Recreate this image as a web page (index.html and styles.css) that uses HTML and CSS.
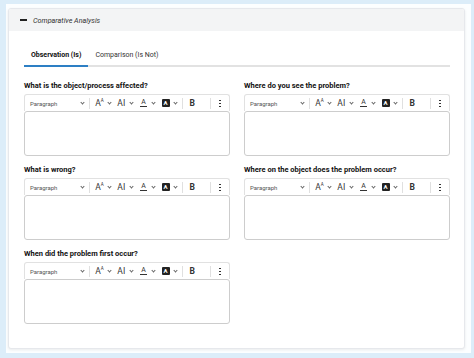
FILE: index.html
```html
<!DOCTYPE html>
<html lang="en">
<head>
    <meta charset="UTF-8">
    <meta name="viewport" content="width=device-width, initial-scale=1.0">
    <title>Comparative Analysis</title>
    <link rel="stylesheet" href="styles.css">
</head>
<body>
    <div class="page">
        <div class="card">
            <div class="card-header">
                <span class="collapse-icon"></span>
                <span class="card-title">Comparative Analysis</span>
            </div>
            <div class="card-body">
                <div class="tabs">
                    <div class="tab active">Observation (Is)</div>
                    <div class="tab">Comparison (Is Not)</div>
                </div>

                <div class="fields">
                    <div class="field">
                        <label class="field-label">What is the object/process affected?</label>
                        <div class="editor">
                            <div class="toolbar">
                                <div class="tb-select">Paragraph <span class="chev"></span></div>
                                <div class="tb-sep"></div>
                                <div class="tb-btn"><span class="ic ic-size">A<sup>A</sup></span><span class="chev"></span></div>
                                <div class="tb-btn"><span class="ic ic-family">AI</span><span class="chev"></span></div>
                                <div class="tb-btn"><span class="ic"><span class="ic-color">A</span></span><span class="chev"></span></div>
                                <div class="tb-btn"><span class="ic"><span class="ic-bg">A</span></span><span class="chev"></span></div>
                                <div class="tb-sep"></div>
                                <div class="tb-btn"><span class="ic-bold">B</span></div>
                                <div class="tb-fill"></div>
                                <div class="tb-sep"></div>
                                <div class="tb-more"><span class="ic-more"></span></div>
                            </div>
                            <div class="editor-area"></div>
                        </div>
                    </div>

                    <div class="field">
                        <label class="field-label">Where do you see the problem?</label>
                        <div class="editor">
                            <div class="toolbar">
                                <div class="tb-select">Paragraph <span class="chev"></span></div>
                                <div class="tb-sep"></div>
                                <div class="tb-btn"><span class="ic ic-size">A<sup>A</sup></span><span class="chev"></span></div>
                                <div class="tb-btn"><span class="ic ic-family">AI</span><span class="chev"></span></div>
                                <div class="tb-btn"><span class="ic"><span class="ic-color">A</span></span><span class="chev"></span></div>
                                <div class="tb-btn"><span class="ic"><span class="ic-bg">A</span></span><span class="chev"></span></div>
                                <div class="tb-sep"></div>
                                <div class="tb-btn"><span class="ic-bold">B</span></div>
                                <div class="tb-fill"></div>
                                <div class="tb-sep"></div>
                                <div class="tb-more"><span class="ic-more"></span></div>
                            </div>
                            <div class="editor-area"></div>
                        </div>
                    </div>

                    <div class="field">
                        <label class="field-label">What is wrong?</label>
                        <div class="editor">
                            <div class="toolbar">
                                <div class="tb-select">Paragraph <span class="chev"></span></div>
                                <div class="tb-sep"></div>
                                <div class="tb-btn"><span class="ic ic-size">A<sup>A</sup></span><span class="chev"></span></div>
                                <div class="tb-btn"><span class="ic ic-family">AI</span><span class="chev"></span></div>
                                <div class="tb-btn"><span class="ic"><span class="ic-color">A</span></span><span class="chev"></span></div>
                                <div class="tb-btn"><span class="ic"><span class="ic-bg">A</span></span><span class="chev"></span></div>
                                <div class="tb-sep"></div>
                                <div class="tb-btn"><span class="ic-bold">B</span></div>
                                <div class="tb-fill"></div>
                                <div class="tb-sep"></div>
                                <div class="tb-more"><span class="ic-more"></span></div>
                            </div>
                            <div class="editor-area"></div>
                        </div>
                    </div>

                    <div class="field">
                        <label class="field-label">Where on the object does the problem occur?</label>
                        <div class="editor">
                            <div class="toolbar">
                                <div class="tb-select">Paragraph <span class="chev"></span></div>
                                <div class="tb-sep"></div>
                                <div class="tb-btn"><span class="ic ic-size">A<sup>A</sup></span><span class="chev"></span></div>
                                <div class="tb-btn"><span class="ic ic-family">AI</span><span class="chev"></span></div>
                                <div class="tb-btn"><span class="ic"><span class="ic-color">A</span></span><span class="chev"></span></div>
                                <div class="tb-btn"><span class="ic"><span class="ic-bg">A</span></span><span class="chev"></span></div>
                                <div class="tb-sep"></div>
                                <div class="tb-btn"><span class="ic-bold">B</span></div>
                                <div class="tb-fill"></div>
                                <div class="tb-sep"></div>
                                <div class="tb-more"><span class="ic-more"></span></div>
                            </div>
                            <div class="editor-area"></div>
                        </div>
                    </div>

                    <div class="field">
                        <label class="field-label">When did the problem first occur?</label>
                        <div class="editor">
                            <div class="toolbar">
                                <div class="tb-select">Paragraph <span class="chev"></span></div>
                                <div class="tb-sep"></div>
                                <div class="tb-btn"><span class="ic ic-size">A<sup>A</sup></span><span class="chev"></span></div>
                                <div class="tb-btn"><span class="ic ic-family">AI</span><span class="chev"></span></div>
                                <div class="tb-btn"><span class="ic"><span class="ic-color">A</span></span><span class="chev"></span></div>
                                <div class="tb-btn"><span class="ic"><span class="ic-bg">A</span></span><span class="chev"></span></div>
                                <div class="tb-sep"></div>
                                <div class="tb-btn"><span class="ic-bold">B</span></div>
                                <div class="tb-fill"></div>
                                <div class="tb-sep"></div>
                                <div class="tb-more"><span class="ic-more"></span></div>
                            </div>
                            <div class="editor-area"></div>
                        </div>
                    </div>
                </div>
            </div>
        </div>
    </div>
</body>
</html>
```

FILE: styles.css
```css
:root {
    --text-color: #222;
    --border-color: #cdcdcd;
    --frame-color: #dcedf9;
    --accent-color: #2d7fc4;
}

* {
    box-sizing: border-box;
}

body {
    margin: 0;
    font-family: Roboto, "Liberation Sans", sans-serif;
    color: var(--text-color);
    background-color: var(--frame-color);
}

.page {
    height: 100vh;
    border-style: solid;
    border-color: var(--frame-color);
    border-width: 4px 3px 5px 6px;
    background-color: #fcfeff;
    padding: 4px 6px 4px 2px;
}

.card {
    height: 100%;
    background-color: white;
    border: 1px solid #e6e8ec;
    border-radius: 3px;
    box-shadow: 0 1px 3px rgba(0, 0, 0, 0.08);
    overflow: hidden;
}

.card-header {
    height: 22px;
    background-color: #f3f4f5;
    display: flex;
    align-items: center;
    padding-left: 11px;
    gap: 6px;
}

.collapse-icon {
    width: 7px;
    height: 1.5px;
    background-color: #222;
}

.card-title {
    font-size: 7.2px;
    font-style: italic;
    color: #333;
}

.card-body {
    padding: 15px 14px 0 15px;
}

.tabs {
    display: flex;
    border-bottom: 2px solid #e2e2e2;
}

.tab {
    font-size: 7px;
    color: #333;
    padding: 5px 7px 6px 7px;
    margin-bottom: -2px;
    border-bottom: 2px solid transparent;
}

.tab.active {
    font-weight: 700;
    color: #111;
    border-bottom-color: var(--accent-color);
}

.fields {
    display: grid;
    grid-template-columns: minmax(0, 1fr) minmax(0, 1fr);
    column-gap: 14px;
    row-gap: 9px;
    margin-top: 14px;
}

.field-label {
    display: block;
    font-size: 7.5px;
    font-weight: 700;
    line-height: 10px;
    margin-bottom: 3px;
    color: #111;
}

.toolbar {
    height: 17px;
    border: 1px solid #e1e1e1;
    border-bottom: none;
    border-radius: 3px 3px 0 0;
    display: flex;
    align-items: center;
    padding: 0 3px 0 5px;
}

.tb-select {
    width: 57px;
    flex-shrink: 0;
    display: flex;
    align-items: center;
    justify-content: space-between;
    font-size: 6px;
    color: #555;
    padding-right: 2px;
}

.tb-sep {
    width: 1px;
    height: 11px;
    flex-shrink: 0;
    background-color: #e0e0e0;
    margin: 0 2px;
}

.tb-btn {
    display: flex;
    align-items: center;
    flex-shrink: 0;
    gap: 2px;
    padding: 0 2.5px;
    color: #333;
}

.tb-fill {
    flex: 1;
}

.tb-more {
    width: 13px;
    display: flex;
    justify-content: center;
}

.chev {
    width: 3px;
    height: 3px;
    border-right: 1px solid #666;
    border-bottom: 1px solid #666;
    transform: rotate(45deg);
    margin: -2px 1px 0 1px;
}

.ic {
    width: 10px;
    display: flex;
    justify-content: center;
    font-size: 8.5px;
    line-height: 1;
}

.ic-size sup {
    font-size: 4.5px;
    vertical-align: 4px;
}

.ic-family {
    letter-spacing: 0.3px;
}

.ic-color {
    font-size: 7px;
    line-height: 7px;
    border-bottom: 1px solid #333;
    padding: 0 1px;
}

.ic-bg {
    font-size: 6px;
    font-weight: 700;
    line-height: 8px;
    width: 8px;
    text-align: center;
    color: white;
    background-color: #222;
    border-radius: 1px;
}

.ic-bold {
    font-size: 8.5px;
    font-weight: 700;
    padding: 0 2px;
}

.ic-more {
    width: 2px;
    height: 8px;
    background: radial-gradient(circle, #333 0.8px, transparent 1px) 0 0 / 2px 3px repeat-y;
}

.editor-area {
    height: 45px;
    border: 1px solid var(--border-color);
    border-radius: 3px;
    background-color: white;
}
```
